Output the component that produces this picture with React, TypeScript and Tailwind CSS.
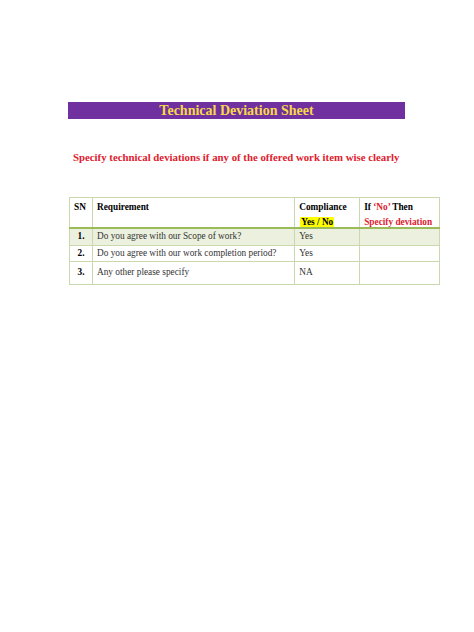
import React from "react";

const serif = { fontFamily: '"Liberation Serif", "Times New Roman", serif' };

export default function App() {
  const rows = [
    { sn: "1.", req: "Do you agree with our Scope of work?", c: "Yes", shade: true, h: "h-[17px]" },
    { sn: "2.", req: "Do you agree with our work completion period?", c: "Yes", shade: false, h: "h-[16px]" },
    { sn: "3.", req: "Any other please specify", c: "NA", shade: false, h: "h-[23px]" },
  ];
  return (
    <div className="w-full h-[632px] bg-white text-black" style={serif}>
      <div className="pt-[102px] pl-[68px]">
        <div className="w-[337px] h-[17px] bg-[#7030a0] flex items-center justify-center">
          <span className="text-[14px] font-bold text-[#f7d84a] leading-none">Technical Deviation Sheet</span>
        </div>
      </div>
      <div className="pl-[73px] pt-[33px] text-[10.8px] font-bold text-[#e0202e] leading-none">
        Specify technical deviations if any of the offered work item wise clearly
      </div>
      <div className="pl-[69px] pt-[34px]">
        <table className="border-collapse w-[371px] text-[9.3px] leading-none">
          <colgroup>
            <col className="w-[23px]" />
            <col className="w-[203px]" />
            <col className="w-[65px]" />
            <col className="w-[80px]" />
          </colgroup>
          <thead>
            <tr className="h-[31px] border-b-2 border-[#9bbb59]">
              <th className="border border-[#c9d8ad] border-b-2 border-b-[#9bbb59] align-top text-left font-bold pl-[4px] pt-[5px]">SN</th>
              <th className="border border-[#c9d8ad] border-b-2 border-b-[#9bbb59] align-top text-left font-bold pl-[4px] pt-[5px]">Requirement</th>
              <th className="border border-[#c9d8ad] border-b-2 border-b-[#9bbb59] align-top text-left font-bold pl-[4px] pt-[5px]">
                <div>Compliance</div>
                <div className="mt-[6px] pl-[1px]"><span className="bg-[#ffff00] px-[1px]">Yes / No</span></div>
              </th>
              <th className="border border-[#c9d8ad] border-b-2 border-b-[#9bbb59] align-top text-left font-bold pl-[4px] pt-[5px]">
                <div>If <span className="text-[#e0202e]">‘No’</span> Then</div>
                <div className="mt-[6px] text-[#e0202e]">Specify deviation</div>
              </th>
            </tr>
          </thead>
          <tbody>
            {rows.map((r) => (
              <tr key={r.sn} className={`${r.h} ${r.shade ? "bg-[#ebf1de]" : "bg-white"}`}>
                <td className="border border-[#c9d8ad] font-bold text-center">{r.sn}</td>
                <td className="border border-[#c9d8ad] pl-[4px] text-[#333]">{r.req}</td>
                <td className="border border-[#c9d8ad] pl-[4px] text-[#333]">{r.c}</td>
                <td className="border border-[#c9d8ad]"></td>
              </tr>
            ))}
          </tbody>
        </table>
      </div>
    </div>
  );
}
